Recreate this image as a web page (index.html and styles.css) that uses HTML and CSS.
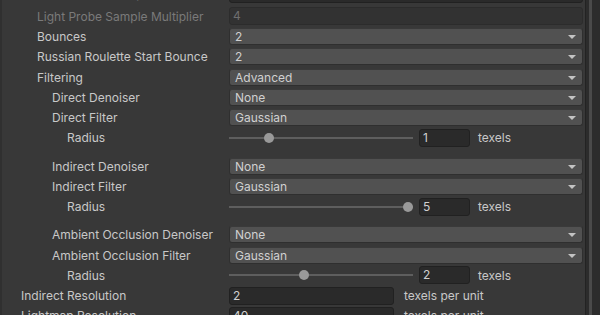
FILE: index.html
```html
<!DOCTYPE html>
<html lang="en">
<head>
    <meta charset="UTF-8">
    <title>Lightmapping Settings</title>
    <link rel="stylesheet" href="styles.css">
</head>
<body>
    <div class="panel">
        <div class="inspector">
            <div class="row first">
                <span class="label lvl1">Environment Samples</span>
                <div class="control"><div class="field">500</div></div>
            </div>
            <div class="row">
                <span class="label lvl1 disabled">Light Probe Sample Multiplier</span>
                <div class="control"><div class="field disabled">4</div></div>
            </div>
            <div class="row">
                <span class="label lvl1">Bounces</span>
                <div class="control"><div class="popup">2</div></div>
            </div>
            <div class="row">
                <span class="label lvl1">Russian Roulette Start Bounce</span>
                <div class="control"><div class="popup">2</div></div>
            </div>
            <div class="row">
                <span class="label lvl1">Filtering</span>
                <div class="control"><div class="popup">Advanced</div></div>
            </div>
            <div class="row">
                <span class="label lvl2">Direct Denoiser</span>
                <div class="control"><div class="popup">None</div></div>
            </div>
            <div class="row">
                <span class="label lvl2">Direct Filter</span>
                <div class="control"><div class="popup">Gaussian</div></div>
            </div>
            <div class="row">
                <span class="label lvl3">Radius</span>
                <div class="control">
                    <div class="slider"><div class="track"></div><div class="thumb" style="left: 35px"></div></div>
                    <div class="field num">1</div>
                    <span class="unit">texels</span>
                </div>
            </div>
            <div class="spacer"></div>
            <div class="row">
                <span class="label lvl2">Indirect Denoiser</span>
                <div class="control"><div class="popup">None</div></div>
            </div>
            <div class="row">
                <span class="label lvl2">Indirect Filter</span>
                <div class="control"><div class="popup">Gaussian</div></div>
            </div>
            <div class="row">
                <span class="label lvl3">Radius</span>
                <div class="control">
                    <div class="slider"><div class="track"></div><div class="thumb" style="left: 174px"></div></div>
                    <div class="field num">5</div>
                    <span class="unit">texels</span>
                </div>
            </div>
            <div class="spacer"></div>
            <div class="row">
                <span class="label lvl2">Ambient Occlusion Denoiser</span>
                <div class="control"><div class="popup">None</div></div>
            </div>
            <div class="row">
                <span class="label lvl2">Ambient Occlusion Filter</span>
                <div class="control"><div class="popup">Gaussian</div></div>
            </div>
            <div class="row">
                <span class="label lvl3">Radius</span>
                <div class="control">
                    <div class="slider"><div class="track"></div><div class="thumb" style="left: 70px"></div></div>
                    <div class="field num">2</div>
                    <span class="unit">texels</span>
                </div>
            </div>
            <div class="row">
                <span class="label lvl0">Indirect Resolution</span>
                <div class="control">
                    <div class="field res">2</div>
                    <span class="unit wide">texels per unit</span>
                </div>
            </div>
            <div class="row">
                <span class="label lvl0">Lightmap Resolution</span>
                <div class="control">
                    <div class="field res">40</div>
                    <span class="unit wide">texels per unit</span>
                </div>
            </div>
        </div>
        <div class="scrollbar"><div class="scroll-thumb"></div></div>
    </div>
</body>
</html>
```

FILE: styles.css
```css
body {
    margin: 0;
    background: #383838;
    font-family: Inter, "Noto Sans", sans-serif;
    font-size: 12px;
    color: #c8c8c8;
    overflow: hidden;
    height: 315px;
}

.panel {
    display: flex;
    height: 315px;
    border-left: 2px solid #303030;
}

.inspector {
    flex: 1;
    margin-top: -15px;
    padding-right: 2px;
}

.row {
    display: flex;
    align-items: center;
    height: 20.25px;
}

/* partly scrolled out of view */
.row.first {
    height: 21.25px;
    align-items: flex-start;
}

.spacer {
    height: 8px;
}

.label {
    width: 227px;
    flex-shrink: 0;
    box-sizing: border-box;
    white-space: nowrap;
}

.row.first .label {
    line-height: 17px;
}

.lvl0 { padding-left: 19px; }
.lvl1 { padding-left: 35px; }
.lvl2 { padding-left: 50px; }
.lvl3 { padding-left: 65px; }

.label.disabled {
    color: #7a7a7a;
}

.control {
    flex: 1;
    display: flex;
    align-items: center;
}

.popup {
    flex: 1;
    height: 17px;
    line-height: 16px;
    box-sizing: border-box;
    padding-left: 5px;
    background: #515151;
    border: 1px solid #2f2f2f;
    border-top-color: #3a3a3a;
    border-radius: 3px;
    color: #d0d0d0;
    position: relative;
}

.popup::after {
    content: "";
    position: absolute;
    right: 6px;
    top: 6px;
    border-left: 4px solid transparent;
    border-right: 4px solid transparent;
    border-top: 4px solid #c4c4c4;
}

.field {
    flex: 1;
    height: 18px;
    line-height: 16px;
    box-sizing: border-box;
    padding-left: 3px;
    background: #2a2a2a;
    border: 1px solid #212121;
    border-radius: 3px;
    color: #d0d0d0;
}

.field.disabled {
    background: #323232;
    border-color: #2c2c2c;
    color: #6e6e6e;
}

.slider {
    width: 184px;
    height: 18px;
    position: relative;
    flex-shrink: 0;
}

.track {
    position: absolute;
    left: 0;
    right: 0;
    top: 8px;
    height: 2px;
    background: #5e5e5e;
}

.thumb {
    position: absolute;
    top: 4px;
    width: 10px;
    height: 10px;
    border-radius: 50%;
    background: #999999;
}

.field.num {
    flex: 0 0 51px;
    margin-left: 6px;
}

.field.res {
    flex: 0 0 165px;
}

.unit {
    margin-left: 8px;
    white-space: nowrap;
}

.unit.wide {
    margin-left: 10px;
}

.scrollbar {
    width: 15px;
    flex-shrink: 0;
    background: #2c2c2c;
    border-left: 1px solid #232323;
    box-sizing: border-box;
    padding-left: 3px;
}

.scroll-thumb {
    width: 3px;
    height: 100%;
    background: #4a4a4a;
}
```
